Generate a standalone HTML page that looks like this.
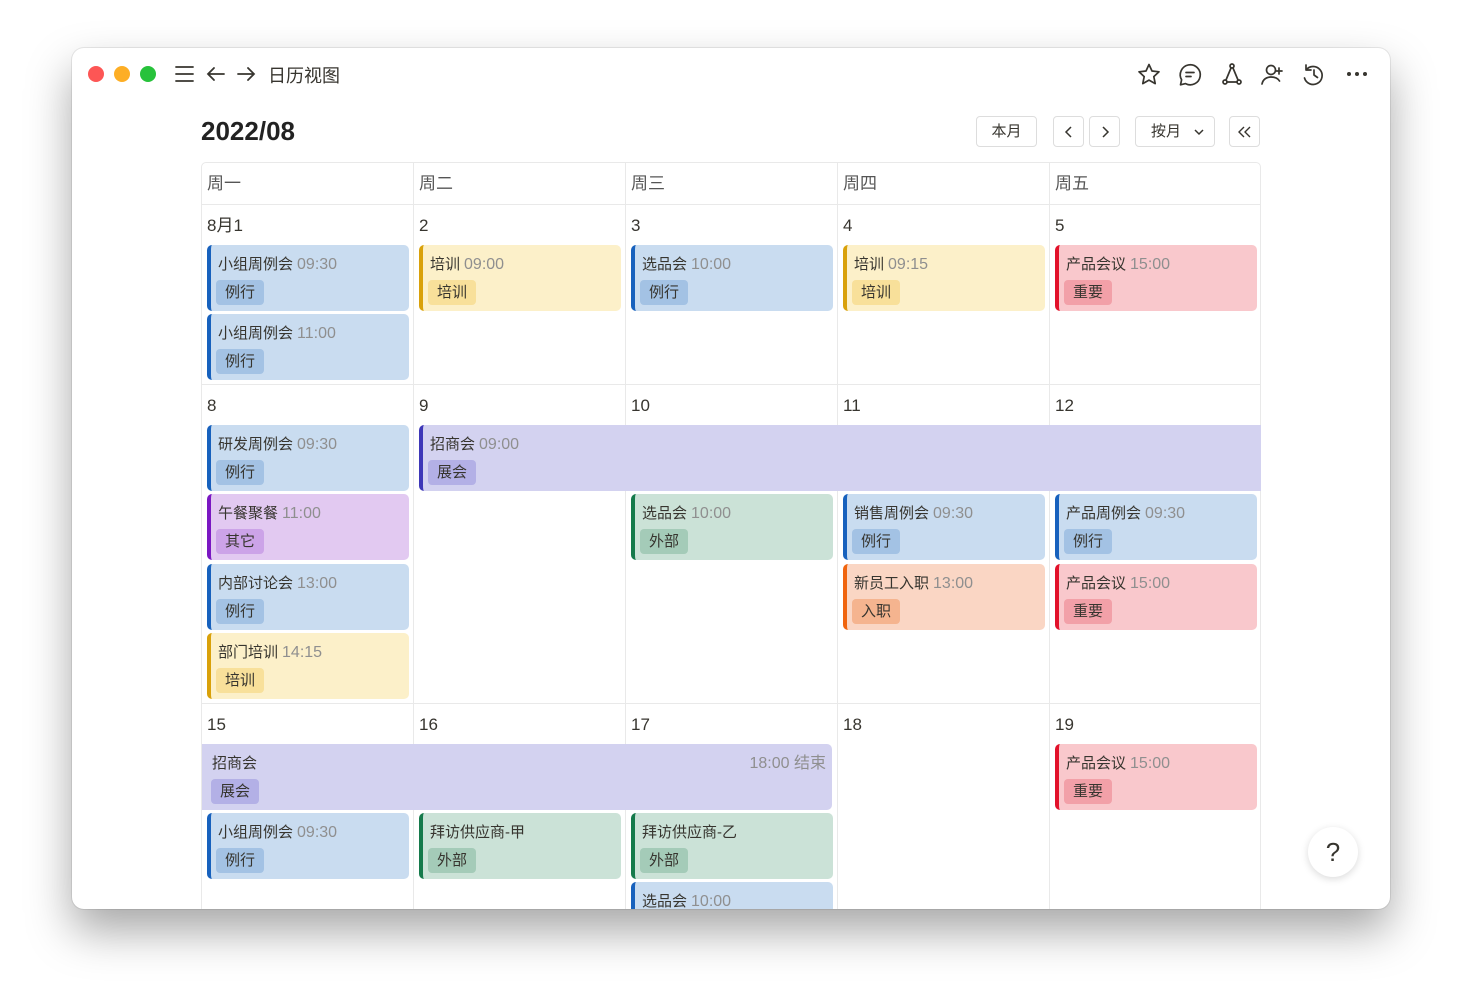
<!DOCTYPE html>
<html><head><meta charset="utf-8"><style>
*{margin:0;padding:0;box-sizing:border-box}
body{width:1462px;height:1005px;background:#fff;position:relative;overflow:hidden;font-family:"Liberation Sans","Noto Sans CJK SC",sans-serif;color:#37352f}
.win{position:absolute;left:72px;top:48px;width:1318px;height:861px;border-radius:12px;background:#fff;box-shadow:0 22px 45px rgba(0,0,0,.35),0 0 0 1px rgba(0,0,0,.08);overflow:hidden}
.abs{position:absolute}
.dot{position:absolute;top:18px;width:16px;height:16px;border-radius:50%}
.ev{position:absolute;width:202px;height:66px;border-radius:5px;border-left:4px solid;overflow:hidden}
.ev .t{position:absolute;left:7px;top:10px;font-size:15px;line-height:20px;white-space:nowrap;color:#37352f}
.ev .t span{color:#8f8f8f;margin-left:4px;font-size:16px}
.ev .g{position:absolute;left:5px;top:35px;height:25px;line-height:25px;padding:0 9px;border-radius:4px;font-size:15px;color:#37352f}
.b{background:#c9dcf0;border-color:#1761bd}.b .g{background:#a3c2e4}
.y{background:#fcf0c9;border-color:#d9a10a}.y .g{background:#f8e09a}
.r{background:#f9c8cc;border-color:#e2112a}.r .g{background:#f2a0a8}
.p{background:#d3d2f0;border-color:#3d37b8}.p .g{background:#b3b0e6}
.v{background:#e2c9f1;border-color:#7a17c2}.v .g{background:#cca3e8}
.gr{background:#cbe2d7;border-color:#157a4b}.gr .g{background:#a4cbb8}
.o{background:#fad6c4;border-color:#f0640e}.o .g{background:#f5b48f}
.hl{position:absolute;height:1px;background:#e9e9e9}
.vl{position:absolute;width:1px;background:#e9e9e9}
.dn{position:absolute;font-size:17px;line-height:20px;color:#37352f}
.btn{position:absolute;top:68px;height:31px;border:1px solid #ddd;border-radius:4px;font-size:15px;line-height:29px;text-align:center;background:#fff}
.btn svg{position:absolute;left:50%;top:50%;transform:translate(-50%,-50%)}
</style></head><body>
<div class="win">
<div class="dot" style="left:16px;background:#fd5655"></div>
<div class="dot" style="left:42px;background:#fdae25"></div>
<div class="dot" style="left:68px;background:#27c23b"></div>
<svg class="abs" style="left:100px;top:14px" width="130" height="24" viewBox="0 0 130 24" fill="none" stroke="#37352f" stroke-width="1.8" stroke-linecap="round">
<path d="M4 5h17M4 12h17M4 19h17"/>
<path d="M52 12H36M42 6l-6 6 6 6"/>
<path d="M66 12h16M76 6l6 6-6 6"/>
</svg>
<div class="abs" style="left:196px;top:14px;font-size:18px">日历视图</div>
<svg class="abs" style="left:1064px;top:14px" width="234" height="26" viewBox="0 0 234 26" fill="none" stroke="#37352f" stroke-width="1.7" stroke-linecap="round" stroke-linejoin="round">
<path d="M13 2.5l3 6.5 7 .8-5.2 4.8 1.4 7-6.2-3.5-6.2 3.5 1.4-7L3 9.8l7-.8z"/>
<path d="M49.5 21.6A10 10 0 1 0 45.6 17.8L44.5 22.8z"/><path d="M50 10.5h8M50 14.5h5"/>
<circle cx="96" cy="4" r="2"/><circle cx="89" cy="20" r="2"/><circle cx="103" cy="20" r="2"/><path d="M95 6l-5 12M97 6l5 12M91 20h10"/>
<circle cx="135" cy="8" r="4.5"/><path d="M126 22c1-5 5-7 9-7s7 1.5 8.5 4M143 6v6M140 9h6"/>
<path d="M170 8a9 9 0 1 1-1.5 8M170 3v5h5M178 8v5l3.5 2.5"/>
</svg>
<svg class="abs" style="left:1274px;top:23px" width="22" height="6"><circle cx="3" cy="3" r="2" fill="#37352f"/><circle cx="11" cy="3" r="2" fill="#37352f"/><circle cx="19" cy="3" r="2" fill="#37352f"/></svg>

<div class="abs" style="left:129px;top:68px;font-size:26px;font-weight:bold;color:#222">2022/08</div>
<div class="btn" style="left:904px;width:61px">本月</div>
<div class="btn" style="left:981px;width:31px"><svg width="10" height="12" fill="none" stroke="#37352f" stroke-width="1.5"><path d="M7 1L2 6l5 5"/></svg></div>
<div class="btn" style="left:1017px;width:31px"><svg width="10" height="12" fill="none" stroke="#37352f" stroke-width="1.5"><path d="M3 1l5 5-5 5"/></svg></div>
<div class="btn" style="left:1063px;width:80px;text-align:left;padding-left:15px">按月<svg style="left:58px;transform:translateY(-50%)" width="10" height="8" fill="none" stroke="#37352f" stroke-width="1.5"><path d="M1 2l4 4 4-4"/></svg></div>
<div class="btn" style="left:1157px;width:31px"><svg width="14" height="12" fill="none" stroke="#37352f" stroke-width="1.4"><path d="M6 1L1 6l5 5M12 1L7 6l5 5"/></svg></div>

<div class="abs" style="left:129px;top:114px;width:1060px;height:760px;border:1px solid #e9e9e9;border-radius:5px"></div>
<div class="hl" style="left:129px;top:156px;width:1060px"></div>
<div class="hl" style="left:129px;top:336px;width:1060px"></div>
<div class="hl" style="left:129px;top:655px;width:1060px"></div>
<div class="vl" style="left:341px;top:114px;height:760px"></div>
<div class="vl" style="left:553px;top:114px;height:760px"></div>
<div class="vl" style="left:765px;top:114px;height:760px"></div>
<div class="vl" style="left:977px;top:114px;height:760px"></div>
<div class="dn" style="left:135px;top:126px;color:#555">周一</div>
<div class="dn" style="left:347px;top:126px;color:#555">周二</div>
<div class="dn" style="left:559px;top:126px;color:#555">周三</div>
<div class="dn" style="left:771px;top:126px;color:#555">周四</div>
<div class="dn" style="left:983px;top:126px;color:#555">周五</div>

<div class="dn" style="left:135px;top:168px">8月1</div>
<div class="dn" style="left:347px;top:168px">2</div>
<div class="dn" style="left:559px;top:168px">3</div>
<div class="dn" style="left:771px;top:168px">4</div>
<div class="dn" style="left:983px;top:168px">5</div>
<div class="dn" style="left:135px;top:348px">8</div>
<div class="dn" style="left:347px;top:348px">9</div>
<div class="dn" style="left:559px;top:348px">10</div>
<div class="dn" style="left:771px;top:348px">11</div>
<div class="dn" style="left:983px;top:348px">12</div>
<div class="dn" style="left:135px;top:667px">15</div>
<div class="dn" style="left:347px;top:667px">16</div>
<div class="dn" style="left:559px;top:667px">17</div>
<div class="dn" style="left:771px;top:667px">18</div>
<div class="dn" style="left:983px;top:667px">19</div>

<div class="ev b" style="left:135px;top:197px"><div class="t">小组周例会<span>09:30</span></div><div class="g">例行</div></div>
<div class="ev b" style="left:135px;top:266px"><div class="t">小组周例会<span>11:00</span></div><div class="g">例行</div></div>
<div class="ev y" style="left:347px;top:197px"><div class="t">培训<span>09:00</span></div><div class="g">培训</div></div>
<div class="ev b" style="left:559px;top:197px"><div class="t">选品会<span>10:00</span></div><div class="g">例行</div></div>
<div class="ev y" style="left:771px;top:197px"><div class="t">培训<span>09:15</span></div><div class="g">培训</div></div>
<div class="ev r" style="left:983px;top:197px"><div class="t">产品会议<span>15:00</span></div><div class="g">重要</div></div>

<div class="ev b" style="left:135px;top:377px"><div class="t">研发周例会<span>09:30</span></div><div class="g">例行</div></div>
<div class="ev v" style="left:135px;top:446px"><div class="t">午餐聚餐<span>11:00</span></div><div class="g">其它</div></div>
<div class="ev b" style="left:135px;top:516px"><div class="t">内部讨论会<span>13:00</span></div><div class="g">例行</div></div>
<div class="ev y" style="left:135px;top:585px"><div class="t">部门培训<span>14:15</span></div><div class="g">培训</div></div>
<div class="ev p" style="left:347px;top:377px;width:842px;border-radius:5px 0 0 5px"><div class="t">招商会<span>09:00</span></div><div class="g">展会</div></div>
<div class="ev gr" style="left:559px;top:446px"><div class="t">选品会<span>10:00</span></div><div class="g">外部</div></div>
<div class="ev b" style="left:771px;top:446px"><div class="t">销售周例会<span>09:30</span></div><div class="g">例行</div></div>
<div class="ev o" style="left:771px;top:516px"><div class="t">新员工入职<span>13:00</span></div><div class="g">入职</div></div>
<div class="ev b" style="left:983px;top:446px"><div class="t">产品周例会<span>09:30</span></div><div class="g">例行</div></div>
<div class="ev r" style="left:983px;top:516px"><div class="t">产品会议<span>15:00</span></div><div class="g">重要</div></div>

<div class="ev p" style="left:130px;top:696px;width:630px;border-left:none;border-radius:0 5px 5px 0"><div class="t" style="left:10px">招商会</div><div class="g" style="left:9px">展会</div><div class="t" style="left:auto;right:6px;color:#8f8f8f;font-size:16px">18:00 结束</div></div>
<div class="ev b" style="left:135px;top:765px"><div class="t">小组周例会<span>09:30</span></div><div class="g">例行</div></div>
<div class="ev gr" style="left:347px;top:765px"><div class="t">拜访供应商-甲</div><div class="g">外部</div></div>
<div class="ev gr" style="left:559px;top:765px"><div class="t">拜访供应商-乙</div><div class="g">外部</div></div>
<div class="ev b" style="left:559px;top:834px"><div class="t">选品会<span>10:00</span></div><div class="g">例行</div></div>
<div class="ev r" style="left:983px;top:696px"><div class="t">产品会议<span>15:00</span></div><div class="g">重要</div></div>

<div class="abs" style="left:1236px;top:779px;width:50px;height:50px;border-radius:50%;background:#fff;box-shadow:0 2px 8px rgba(0,0,0,.15);font-size:26px;text-align:center;line-height:50px">?</div>
</div>
</body></html>
